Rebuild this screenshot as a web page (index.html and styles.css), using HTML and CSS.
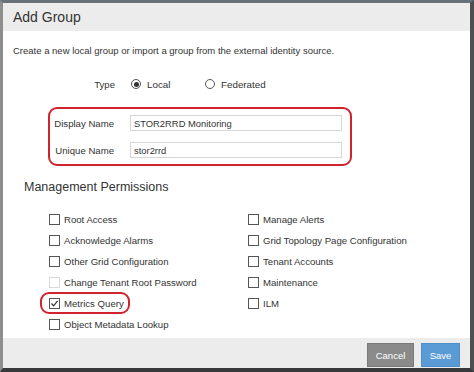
FILE: index.html
```html
<!DOCTYPE html>
<html lang="en">
<head>
    <meta charset="UTF-8">
    <meta name="viewport" content="width=device-width, initial-scale=1.0">
    <title>Add Group</title>
    <link rel="stylesheet" href="styles.css">
</head>
<body>
    <div class="dialog">
        <div class="dialog-header">Add Group</div>

        <div class="dialog-body">
            <p class="intro">Create a new local group or import a group from the external identity source.</p>

            <div class="type-row">
                <span class="form-label">Type</span>
                <div class="radio-group">
                    <label class="radio-option">
                        <span class="radio checked"></span>
                        Local
                    </label>
                    <label class="radio-option">
                        <span class="radio"></span>
                        Federated
                    </label>
                </div>
            </div>

            <div class="name-box">
                <label class="form-label" for="display-name">Display Name</label>
                <input class="text-input" id="display-name" type="text" value="STOR2RRD Monitoring">
                <label class="form-label" for="unique-name">Unique Name</label>
                <input class="text-input" id="unique-name" type="text" value="stor2rrd">
            </div>

            <h2 class="section-title">Management Permissions</h2>

            <div class="perm-grid">
                <div class="perm-col">
                    <div class="perm-item"><span class="checkbox"></span>Root Access</div>
                    <div class="perm-item"><span class="checkbox"></span>Acknowledge Alarms</div>
                    <div class="perm-item"><span class="checkbox"></span>Other Grid Configuration</div>
                    <div class="perm-item"><span class="checkbox disabled"></span>Change Tenant Root Password</div>
                    <div class="perm-item">
                        <span class="perm-highlight">
                            <span class="checkbox">
                                <svg viewBox="0 0 9 9" width="9" height="9"><polyline points="1.5,4.5 3.6,6.8 7.6,1.8" fill="none" stroke="#333" stroke-width="1.2"/></svg>
                            </span>Metrics Query
                        </span>
                    </div>
                    <div class="perm-item"><span class="checkbox"></span>Object Metadata Lookup</div>
                </div>
                <div class="perm-col">
                    <div class="perm-item"><span class="checkbox"></span>Manage Alerts</div>
                    <div class="perm-item"><span class="checkbox"></span>Grid Topology Page Configuration</div>
                    <div class="perm-item"><span class="checkbox"></span>Tenant Accounts</div>
                    <div class="perm-item"><span class="checkbox"></span>Maintenance</div>
                    <div class="perm-item"><span class="checkbox"></span>ILM</div>
                </div>
            </div>
        </div>

        <div class="dialog-footer">
            <button class="btn btn-cancel">Cancel</button>
            <button class="btn btn-save">Save</button>
        </div>
    </div>
</body>
</html>
```

FILE: styles.css
```css
* {
    box-sizing: border-box;
}
body {
    margin: 0;
    font-family: "Liberation Sans", Arial, sans-serif;
    color: #333;
    background-color: #6a7479;
}
.dialog {
    height: 372px;
    display: flex;
    flex-direction: column;
    border-top: 3px solid #66717a;
    border-left: 3px solid #8e8e8e;
    border-right: 4px solid #4d4f52;
    border-bottom: 4px solid #38393b;
    background-color: #fff;
}
.dialog-header {
    height: 28px;
    padding: 5px 10px 0;
    background-color: #ececec;
    font-size: 14px;
    line-height: 18px;
    color: #333;
}
.dialog-body {
    flex: 1;
    padding: 0 10px;
}
.intro {
    margin: 13px 0 0;
    font-size: 9.5px;
    line-height: 14px;
}
.type-row {
    display: grid;
    grid-template-columns: 68px 1fr;
    column-gap: 16px;
    align-items: center;
    margin: 19px 0 0 34px;
    height: 14px;
    font-size: 9.6px;
}
.form-label {
    text-align: right;
    font-size: 9.6px;
    color: #333;
}
.radio-group {
    display: flex;
}
.radio-option {
    display: flex;
    align-items: center;
    gap: 6px;
    width: 74px;
    font-size: 9.8px;
}
.radio {
    width: 10px;
    height: 10px;
    border: 1px solid #555;
    border-radius: 50%;
    display: flex;
    align-items: center;
    justify-content: center;
}
.radio.checked::after {
    content: "";
    width: 5px;
    height: 5px;
    border-radius: 50%;
    background-color: #333;
}
.name-box {
    display: grid;
    grid-template-columns: 64px 212px;
    column-gap: 16px;
    row-gap: 11px;
    align-items: center;
    width: 304px;
    margin: 16px 0 0 35px;
    padding: 6px 8px 6px 0;
    border: 2px solid #d1232d;
    border-radius: 9px;
}
.text-input {
    height: 16px;
    padding: 0 3px;
    border: 1px solid #d6d6d6;
    font-family: "Liberation Sans", Arial, sans-serif;
    font-size: 9.4px;
    color: #333;
    outline: none;
}
.section-title {
    margin: 13px 0 0 11px;
    font-size: 12.5px;
    line-height: 16px;
    font-weight: normal;
    color: #333;
}
.perm-grid {
    display: grid;
    grid-template-columns: 199px 1fr;
    margin: 14px 0 0 36px;
}
.perm-item {
    height: 21px;
    display: flex;
    align-items: center;
    gap: 4px;
    font-size: 9.6px;
}
.checkbox {
    width: 11px;
    height: 11px;
    border: 1px solid #555;
    background-color: #fff;
    display: flex;
    align-items: center;
    justify-content: center;
}
.checkbox.disabled {
    border-color: #d9d9d9;
}
.perm-highlight {
    position: relative;
    display: flex;
    align-items: center;
    gap: 4px;
}
.perm-highlight::after {
    content: "";
    position: absolute;
    left: -9px;
    right: -6px;
    top: -6px;
    bottom: -5px;
    border: 2px solid #d1232d;
    border-radius: 9px;
}
.dialog-footer {
    height: 30px;
    display: flex;
    justify-content: flex-end;
    gap: 7px;
    padding: 5px 10px 0;
    background-color: #ececec;
}
.btn {
    height: 24px;
    border: 1px solid transparent;
    font-family: "Liberation Sans", Arial, sans-serif;
    font-size: 9.5px;
    color: #fff;
    cursor: pointer;
}
.btn-cancel {
    width: 47px;
    background-color: #8a8a8a;
    border-color: #7a7a7a;
}
.btn-save {
    width: 39px;
    background-color: #5b9bd5;
    border-color: #4f8fc9;
}
```
